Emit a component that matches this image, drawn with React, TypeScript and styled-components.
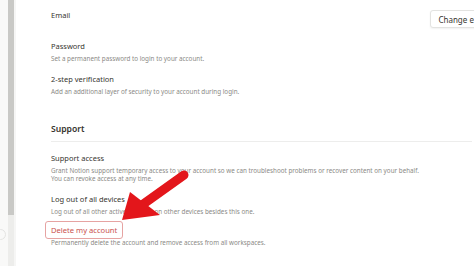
import styled, { createGlobalStyle } from "styled-components";

const GlobalStyle = createGlobalStyle`
    html, body {
        margin: 0;
        padding: 0;
        background: #ffffff;
        overflow: hidden;
    }
    body {
        font-family: "Noto Sans", "Open Sans", sans-serif;
        color: #37352f;
    }
`;

const settings = [
    { title: "Password", desc: ["Set a permanent password to login to your account."] },
    { title: "2-step verification", desc: ["Add an additional layer of security to your account during login."] },
];

const support = [
    {
        title: "Support access",
        desc: [
            "Grant Notion support temporary access to your account so we can troubleshoot problems or recover content on your behalf.",
            "You can revoke access at any time.",
        ],
    },
    { title: "Log out of all devices", desc: ["Log out of all other active sessions on other devices besides this one."] },
];

export default function App() {
    return (
        <>
            <GlobalStyle />
            <Page>
                <SideStrip>
                    <SideDot />
                </SideStrip>
                <ScrollTrack>
                    <ScrollThumb />
                </ScrollTrack>
                <Content>
                    <EmailRow>
                        <Title>Email</Title>
                        <GhostButton>Change email</GhostButton>
                    </EmailRow>

                    {settings.map((item) => (
                        <Setting key={item.title} space={10}>
                            <Title>{item.title}</Title>
                            {item.desc.map((line) => (
                                <Desc key={line}>{line}</Desc>
                            ))}
                        </Setting>
                    ))}

                    <SectionHeader>Support</SectionHeader>
                    <Divider />

                    {support.map((item, i) => (
                        <Setting key={item.title} space={i === support.length - 1 ? 5 : 10}>
                            <Title>{item.title}</Title>
                            {item.desc.map((line) => (
                                <Desc key={line}>{line}</Desc>
                            ))}
                        </Setting>
                    ))}

                    <DangerButton>Delete my account</DangerButton>
                    <Desc>Permanently delete the account and remove access from all workspaces.</Desc>
                </Content>

                <Arrow viewBox="0 0 474 266">
                    <path d="M184 175 L142 205" stroke="#e3161b" strokeWidth="9" strokeLinecap="round" fill="none" />
                    <polygon points="122,220 130,192 160,215" fill="#e3161b" />
                </Arrow>
            </Page>
        </>
    );
}

const Page = styled.div`
    position: relative;
    display: flex;
    width: 474px;
    height: 266px;
    overflow: hidden;
`;

const SideStrip = styled.div`
    position: relative;
    width: 8px;
    background: #f9f9f8;
`;

const SideDot = styled.div`
    position: absolute;
    left: -5px;
    top: 229px;
    width: 9px;
    height: 9px;
    border-radius: 50%;
    border: 1px solid #e4e4e2;
`;

const ScrollTrack = styled.div`
    width: 6px;
    background: #ededeb;
    border-right: 2px solid #f6f6f5;
`;

const ScrollThumb = styled.div`
    height: 215px;
    background: #c9c9c6;
`;

const Content = styled.div`
    flex: 1;
    display: flex;
    flex-direction: column;
    align-items: flex-start;
    padding: 9px 2px 0 35px;
`;

const EmailRow = styled.div`
    align-self: stretch;
    display: flex;
    justify-content: space-between;
    align-items: flex-start;
    height: 31px;
`;

const Setting = styled.div<{ space: number }>`
    display: flex;
    flex-direction: column;
    margin-bottom: ${({ space }) => space}px;

    & > div:nth-child(2) {
        margin-top: 3px;
    }
`;

const Title = styled.div`
    font-size: 7.5px;
    line-height: 12px;
    color: #37352f;
    white-space: nowrap;
`;

const Desc = styled.div`
    font-size: 6.3px;
    line-height: 8px;
    color: #8b8a86;
    white-space: nowrap;
`;

const GhostButton = styled.button`
    margin-right: -26px;
    margin-top: 1px;
    height: 18px;
    padding: 0 7px;
    font-family: inherit;
    font-size: 8px;
    color: #37352f;
    background: #ffffff;
    border: 1px solid #e3e3e1;
    border-radius: 3px;
    box-shadow: 0 1px 2px rgba(15, 15, 15, 0.06);
    white-space: nowrap;
`;

const SectionHeader = styled.div`
    margin-top: 16px;
    font-size: 8.6px;
    font-weight: 600;
    line-height: 14px;
    color: #37352f;
`;

const Divider = styled.div`
    align-self: stretch;
    height: 1px;
    background: #ededec;
    margin: 5px 0 10px;
`;

const DangerButton = styled.button`
    margin-left: -6px;
    height: 18px;
    padding: 0 5px;
    font-family: inherit;
    font-size: 7.6px;
    color: #c9504d;
    background: #ffffff;
    border: 1px solid #e6a3a2;
    border-radius: 3px;
    white-space: nowrap;
`;

const Arrow = styled.svg`
    position: absolute;
    inset: 0;
    width: 474px;
    height: 266px;
    pointer-events: none;
`;
